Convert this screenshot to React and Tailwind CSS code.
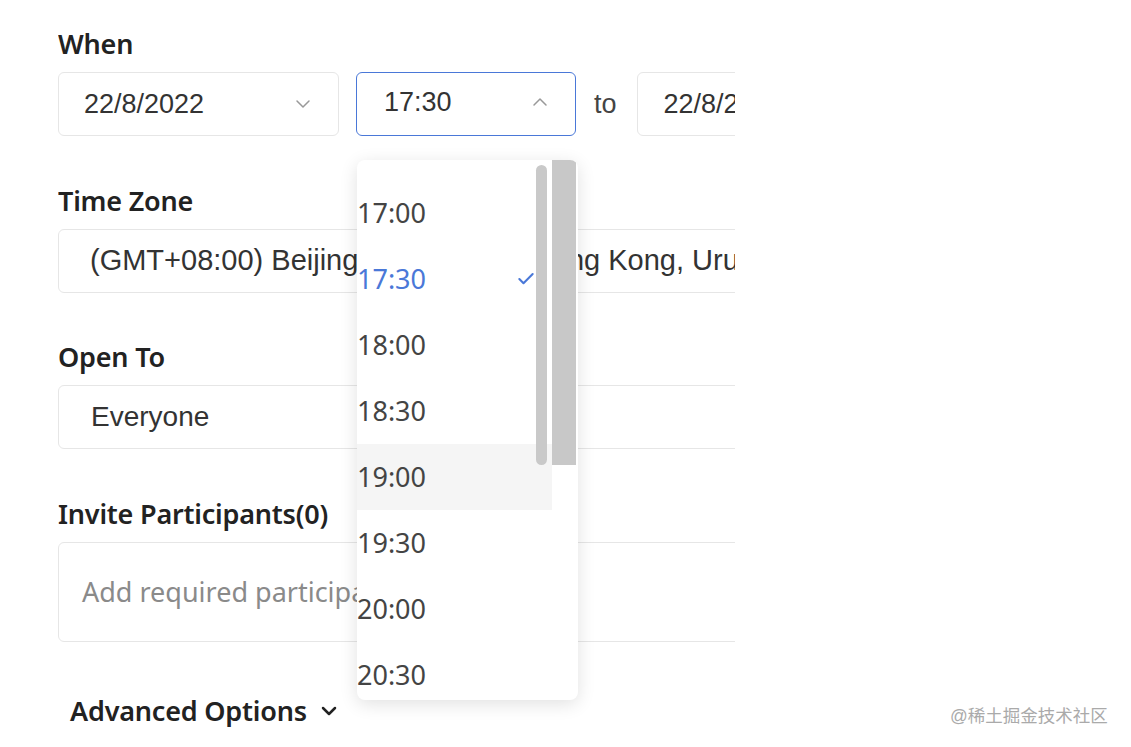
import { Check, ChevronDown, ChevronUp } from "lucide-react";

const times = ["17:00", "17:30", "18:00", "18:30", "19:00", "19:30", "20:00", "20:30"];

function Label({ children }) {
  return (
    <div className="h-[32px] leading-[32px] mb-3 text-[27px] font-semibold text-[#222] font-['Noto_Sans',sans-serif] tracking-[-0.2px]">
      {children}
    </div>
  );
}

function TimeDropdown() {
  return (
    <div className="absolute left-px top-[88px] w-[221px] h-[540px] bg-white rounded-lg shadow-[0_4px_18px_rgba(0,0,0,0.12)] overflow-hidden z-10">
      <div className="pt-5">
        {times.map((t) => {
          const selected = t === "17:30";
          const hover = t === "19:00";
          return (
            <div
              key={t}
              className={`h-[66px] w-[195px] flex items-center justify-between pr-3 text-[27px] font-['Noto_Sans',sans-serif] ${
                selected ? "text-[#4a78d8]" : "text-[#444]"
              } ${hover ? "bg-[#f5f5f5]" : ""}`}
            >
              <span>{t}</span>
              {selected && <Check className="w-[20px] h-[20px] mr-[4px]" strokeWidth={2.5} />}
            </div>
          );
        })}
      </div>
      <div className="absolute left-[179px] top-[5px] w-[11px] h-[300px] rounded-full bg-[#c9c9c9]" />
      <div className="absolute left-[195px] top-0 w-[24px] h-[305px] bg-[#c8c8c8]" />
    </div>
  );
}

export default function App() {
  return (
    <div className="relative w-[1131px] h-[747px] bg-white overflow-hidden">
      <div className="ml-[58px] w-[677px] pt-[28px] overflow-hidden font-['Liberation_Sans',Arial,sans-serif]">
        <Label>When</Label>
        <div className="flex items-center">
          <div className="w-[281px] shrink-0 h-[64px] border border-[#e6e6e6] rounded-md flex items-center justify-between pl-[25px] pr-[23px] text-[27px] text-[#333]">
            <span>22/8/2022</span>
            <ChevronDown className="w-[24px] h-[24px] text-[#999]" strokeWidth={1.5} />
          </div>
          <div className="relative shrink-0 ml-[17px]">
            <div className="w-[220px] h-[64px] border border-[#4a78d8] rounded-md flex items-center justify-between pl-[27px] pr-[23px] text-[27px] text-[#333]">
              <span className="-mt-[4px]">17:30</span>
              <ChevronUp className="w-[24px] h-[24px] text-[#999] -mt-[4px]" strokeWidth={1.5} />
            </div>
            <TimeDropdown />
          </div>
          <span className="shrink-0 ml-[18px] mr-[20px] text-[27px] text-[#444]">to</span>
          <div className="w-[281px] shrink-0 h-[64px] border border-[#e6e6e6] rounded-md flex items-center pl-[26px] text-[27px] text-[#333]">
            <span>22/8/2022</span>
          </div>
        </div>

        <div className="mt-[49px]">
          <Label>Time Zone</Label>
          <div className="w-[700px] h-[64px] border border-[#e6e6e6] rounded-md flex items-center pl-[31px] text-[29px] text-[#333] whitespace-nowrap">
            (GMT+08:00) Beijing, Chongqing, Hong Kong, Urumqi
          </div>
        </div>

        <div className="mt-[48px]">
          <Label>Open To</Label>
          <div className="w-[700px] h-[64px] border border-[#e6e6e6] rounded-md flex items-center pl-[32px] text-[28px] text-[#333]">
            Everyone
          </div>
        </div>

        <div className="mt-[49px]">
          <Label>Invite Participants(0)</Label>
          <div className="w-[700px] h-[100px] border border-[#e6e6e6] rounded-md flex items-center pl-[23px] text-[27px] text-[#8a8a8a] font-['Noto_Sans',sans-serif] whitespace-nowrap">
            Add required participants
          </div>
        </div>

        <div className="mt-[53px] ml-[12px] flex items-center gap-[10px] text-[27px] font-semibold text-[#222] font-['Noto_Sans',sans-serif] tracking-[-0.2px] h-[32px]">
          <span>Advanced Options</span>
          <ChevronDown className="w-[24px] h-[24px]" strokeWidth={2.5} />
        </div>
      </div>

      <div className="absolute left-[950px] top-[703px] text-[17.5px] text-[#aaa] font-['Liberation_Sans','Noto_Sans_CJK_SC',sans-serif]">
        @稀土掘金技术社区
      </div>
    </div>
  );
}
